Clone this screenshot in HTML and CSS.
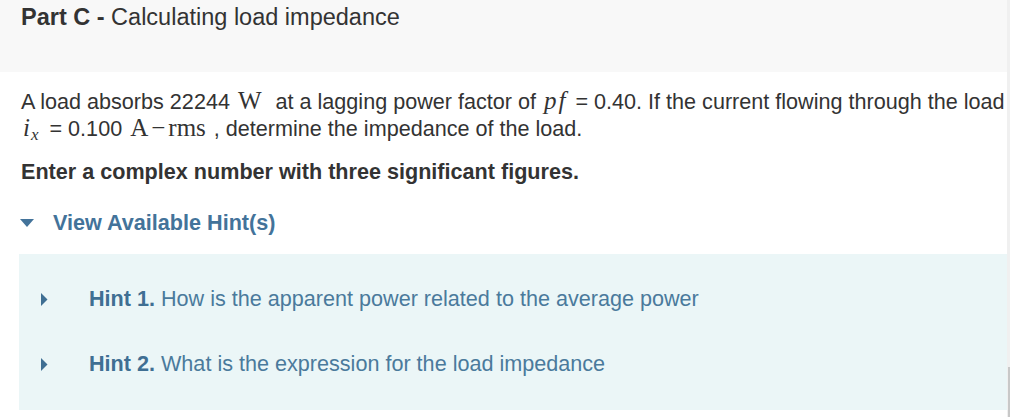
FILE: index.html
```html
<!DOCTYPE html>
<html>
<head>
<meta charset="utf-8">
<link rel="stylesheet" href="styles.css">
</head>
<body>
<div class="page">
  <div class="main">
    <header class="part-header">
      <h2 class="part-title"><b>Part C -</b> Calculating load impedance</h2>
    </header>
    <section class="problem">
      <p class="question"><span class="qline">A load absorbs 22244 <span class="m">W</span> &nbsp;at a lagging power factor of <span class="m mi pf">pf</span> = 0.40. If the current flowing through the load</span><span class="qline"><span class="m mi ix">i<sub>x</sub></span> = 0.100 <span class="m">A<span class="op">−</span>rms</span> , determine the impedance of the load.</span></p>
      <p class="instr">Enter a complex number with three significant figures.</p>
      <div class="hints-toggle">
        <svg class="caret-down" width="14" height="10" viewBox="0 0 14 10"><path d="M0 1 L14 1 L7 9 Z" fill="#43739a"/></svg>
        <span>View Available Hint(s)</span>
      </div>
      <div class="hints">
        <div class="hint">
          <svg class="caret-right" width="8" height="13" viewBox="0 0 8 13"><path d="M1 0 L7.5 6.5 L1 13 Z" fill="#3f6f93"/></svg>
          <span class="hint-text"><b>Hint 1.</b> How is the apparent power related to the average power</span>
        </div>
        <div class="hint">
          <svg class="caret-right" width="8" height="13" viewBox="0 0 8 13"><path d="M1 0 L7.5 6.5 L1 13 Z" fill="#3f6f93"/></svg>
          <span class="hint-text"><b>Hint 2.</b> What is the expression for the load impedance</span>
        </div>
      </div>
    </section>
  </div>
  <div class="scroll-track"><div class="scroll-thumb"></div></div>
</div>
</body>
</html>
```
FILE: styles.css
```css
* { box-sizing: border-box; }
html, body { margin: 0; padding: 0; background: #fff; }
body { font-family: "Liberation Sans", Arial, sans-serif; color: #333; }
.page { display: flex; width: 1010px; height: 417px; overflow: hidden; }
.main { width: 1007px; flex: none; overflow: hidden; }
.scroll-track { width: 3px; flex: none; background: #f0f0f0; display: flex; flex-direction: column; justify-content: flex-end; }
.scroll-thumb { height: 50px; width: 2px; background: #c8c8c8; margin-left: 1px; }
.part-header { height: 72px; background: #f8f8f8; padding: 3px 0 0 21px; }
.part-title { margin: 0; font-size: 23.5px; font-weight: normal; line-height: 28px; color: #333; }
.part-title b { font-weight: bold; }
.problem { padding: 16px 0 0 0; }
.question { margin: 0 0 0 21px; font-size: 21.6px; line-height: 26px; }
.qline { display: block; white-space: nowrap; }
.m { font-family: "Liberation Serif", "Times New Roman", serif; font-size: 25px; padding: 0 2px; }
.mi { font-style: italic; }
.pf { letter-spacing: 2px; }
.ix { padding-right: 5px; }
.m sub { font-size: 17px; vertical-align: -4px; line-height: 0; margin-left: 1px; }
.op { margin: 0 3px; }
.instr { margin: 17px 0 0 21px; font-size: 21.6px; font-weight: bold; line-height: 26px; }
.hints-toggle { display: flex; align-items: center; gap: 19px; margin: 25px 0 0 20px; color: #43739a; font-weight: bold; font-size: 21.6px; line-height: 26px; }
.hints { margin: 18px 0 0 19px; background: #ebf6f7; height: 156px; padding: 32px 0 0 21px; display: flex; flex-direction: column; gap: 39px; }
.hint { display: flex; align-items: center; gap: 41px; color: #4a7a9c; font-size: 21.6px; line-height: 26px; }
.hint-text b { color: #3f6f93; }
```
